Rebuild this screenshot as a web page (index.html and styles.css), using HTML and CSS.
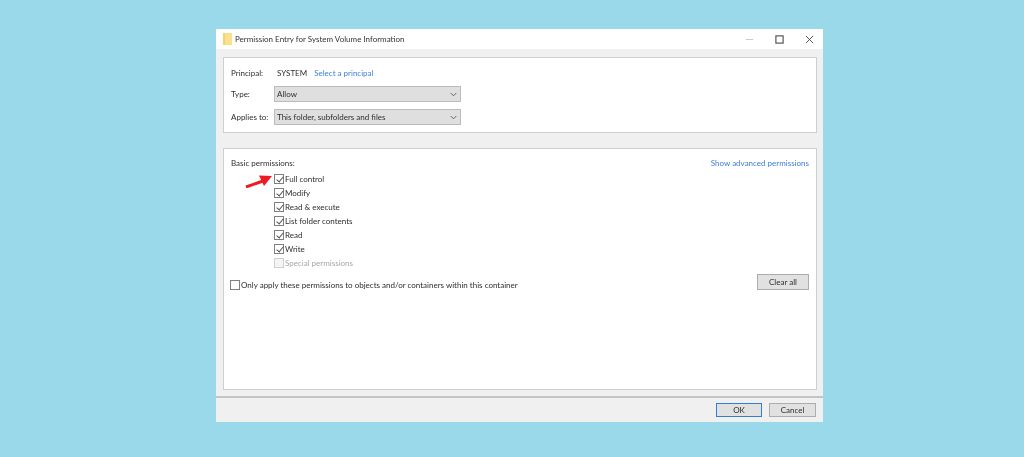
FILE: index.html
```html
<!DOCTYPE html>
<html lang="en">
<head>
<meta charset="utf-8">
<title>Permission Entry</title>
<link rel="stylesheet" href="styles.css">
</head>
<body>
<div class="window">
  <header class="titlebar">
    <svg class="folder" viewBox="0 0 9 12"><path d="M0 0h9v12H0z" fill="#fbe08e"/><path d="M0 0h2v12H0z" fill="#f5d272"/></svg>
    <span class="title">Permission Entry for System Volume Information</span>
    <div class="controls">
      <svg class="ctl" viewBox="0 0 10 10"><path d="M1 5h8" stroke="#c4c4c4" fill="none"/></svg>
      <svg class="ctl" viewBox="0 0 10 10"><rect x="1" y="1" width="8" height="8" stroke="#444" stroke-width="1.2" fill="none"/></svg>
      <svg class="ctl" viewBox="0 0 10 10"><path d="M1 1l8 8M9 1l-8 8" stroke="#444" fill="none"/></svg>
    </div>
  </header>
  <main class="content">
    <section class="panel top">
      <div class="row first"><span class="label">Principal:</span><span class="system">SYSTEM</span><a class="link">Select a principal</a></div>
      <div class="row"><span class="label">Type:</span><div class="select"><span>Allow</span><svg class="chev" viewBox="0 0 8 5"><path d="M.8.8L4 4l3.2-3.2" stroke="#555" fill="none"/></svg></div></div>
      <div class="row"><span class="label">Applies to:</span><div class="select"><span>This folder, subfolders and files</span><svg class="chev" viewBox="0 0 8 5"><path d="M.8.8L4 4l3.2-3.2" stroke="#555" fill="none"/></svg></div></div>
    </section>
    <section class="panel bottom">
      <div class="head"><span>Basic permissions:</span><a class="link">Show advanced permissions</a></div>
      <ul class="perms">
        <li class="arrow-row">
          <svg class="arrow" viewBox="0 0 28 14"><path d="M1 13L18 7" stroke="#ed1c24" stroke-width="3" fill="none"/><path d="M27 2L14 1.500L19 12z" fill="#ed1c24"/></svg>
          <span class="box on"></span>Full control</li>
        <li><span class="box on"></span>Modify</li>
        <li><span class="box on"></span>Read &amp; execute</li>
        <li><span class="box on"></span>List folder contents</li>
        <li><span class="box on"></span>Read</li>
        <li><span class="box on"></span>Write</li>
        <li class="disabled"><span class="box"></span>Special permissions</li>
      </ul>
      <div class="only">
        <span class="box big"></span><span class="only-text">Only apply these permissions to objects and/or containers within this container</span>
        <button class="btn clear">Clear all</button>
      </div>
    </section>
  </main>
  <footer class="footer">
    <button class="btn ok">OK</button>
    <button class="btn cancel">Cancel</button>
  </footer>
</div>
</body>
</html>
```
FILE: styles.css
```css
html, body { margin: 0; height: 100%; }
body {
  background: #99d9ea;
  font-family: Lato, "Open Sans", sans-serif;
  font-size: 8px;
  color: #2e2e2e;
  padding: 29px 0 0 216px;
  box-sizing: border-box;
  overflow: hidden;
}
.window {
  width: 607px;
  height: 393px;
  background: #f0f0f0;
  display: flex;
  flex-direction: column;
  filter: blur(0.45px);
}
.titlebar {
  height: 20px;
  background: #fff;
  display: flex;
  align-items: center;
  padding: 0 9px 0 7px;
}
.folder { width: 9px; height: 12px; margin-right: 3px; }
.title { color: #333; }
.controls { margin-left: auto; display: flex; gap: 21px; }
.ctl { width: 9px; height: 9px; }
.content {
  flex: 1;
  padding: 8px 6px 0 7px;
  display: flex;
  flex-direction: column;
  gap: 15px;
}
.panel {
  background: #fff;
  border: 1px solid #cfcfcf;
  box-sizing: border-box;
}
.top { height: 76px; padding: 8px 7px; }
.row { display: flex; align-items: center; height: 16px; margin-bottom: 7px; }
.row.first { height: 14px; margin-bottom: 6px; }
.label { width: 43px; }
.system { margin: 0 7px 0 3px; }
.link { color: #3d7fd6; }
.select {
  width: 187px;
  height: 16px;
  box-sizing: border-box;
  background: #dfdfdf;
  border: 1px solid #bcbcbc;
  display: flex;
  align-items: center;
  justify-content: space-between;
  padding: 0 3px 0 2px;
}
.chev { width: 7px; height: 5px; }
.bottom { height: 242px; padding: 9px 7px 0 7px; }
.head { display: flex; justify-content: space-between; height: 14px; }
.perms { list-style: none; margin: 0 0 0 43px; padding: 0; }
.perms li { display: flex; align-items: center; height: 14px; gap: 1px; position: relative; }
.box {
  width: 10px; height: 10px;
  box-sizing: border-box;
  border: 1px solid #808080;
  background: #fff;
  flex: none;
  position: relative;
}
.box.on::after {
  content: "";
  position: absolute;
  left: 2.5px; top: 0;
  width: 3px; height: 6px;
  border: solid #555;
  border-width: 0 1px 1px 0;
  transform: rotate(40deg);
}
.disabled { color: #a6a6a6; }
.disabled .box { border-color: #cfcfcf; background: #f4f4f4; }
.arrow { position: absolute; left: -29px; top: 2px; width: 28px; height: 14px; }
.only { display: flex; align-items: flex-start; margin-top: 4px; gap: 1px; margin-left: -1px; }
.box.big { margin-top: 6px; }
.only-text { flex: 1; margin-top: 6px; }
.btn {
  font: inherit;
  color: #2e2e2e;
  background: #e1e1e1;
  border: 1px solid #adadad;
  box-sizing: border-box;
  padding: 0;
}
.clear { width: 52px; height: 16px; }
.footer {
  height: 26px;
  border-top: 2px solid #c4c4c4;
  display: flex;
  justify-content: flex-end;
  align-items: center;
  gap: 7px;
  padding: 0 7px 0 0;
  box-sizing: border-box;
}
.ok { width: 46px; height: 14px; border: 1.5px solid #2f7fd0; }
.cancel { width: 47px; height: 14px; }
```
